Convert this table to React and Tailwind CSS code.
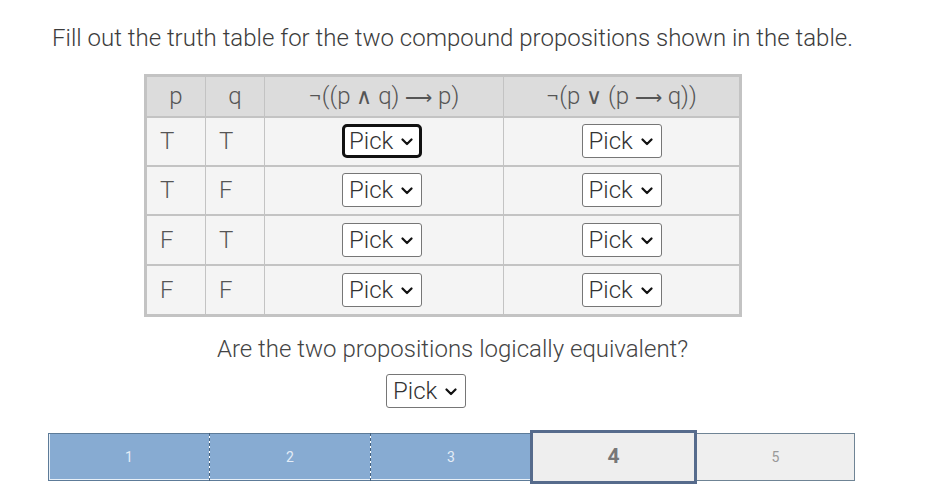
import React from 'react';

const rows = [
  ['T', 'T', 'h-[49px]'],
  ['T', 'F', 'h-[49px]'],
  ['F', 'T', 'h-[50px]'],
  ['F', 'F', 'h-[51px]'],
];

function Sym({ children, size = 'text-[22px]' }) {
  return <span className={"font-['DejaVu_Sans',sans-serif] font-extralight " + size}>{children}</span>;
}

function Pick({ focused = false }) {
  return (
    <div
      className={
        'inline-flex items-center h-[34px] w-[80px] bg-white gap-[8px] text-[24px] text-[#333] ' +
        (focused ? 'border-[3px] border-[#111] rounded-[5px] pl-[4px]' : 'border border-[#767676] rounded-[3px] pl-[6px]')
      }
    >
      <span className="leading-none">Pick</span>
      <svg width="12" height="8" viewBox="0 0 12 8" className="mt-[2px]">
        <path d="M1.5 1.5 L6 6 L10.5 1.5" fill="none" stroke="#111" strokeWidth="2.2" strokeLinecap="round" strokeLinejoin="round" />
      </svg>
    </div>
  );
}

function Seg({ n, first = false }) {
  return (
    <div
      className={
        'h-full bg-[#87abd2] border-y border-[#5d7b98] flex items-center justify-center text-[14px] text-[#e4edf7] font-normal ' +
        (first ? 'w-[161px] border-l shadow-[inset_1px_-1px_0_#e8f0f8]' : 'w-[160px] shadow-[inset_0_-1px_0_#e8f0f8]')
      }
    >
      {n}
    </div>
  );
}

export default function App() {
  return (
    <div className="w-[927px] h-[492px] bg-white font-['Roboto',sans-serif] font-light text-[#444] pt-[22px]">
      <h1 className="ml-[52px] text-[24px] leading-[32px] font-light text-[#3c3c3c]">
        Fill out the truth table for the two compound propositions shown in the table.
      </h1>

      <table className="ml-[144px] mt-[20px] border-collapse border-[3px] border-[#c3c3c3] w-[598px] text-[24px] text-[#555]">
        <thead>
          <tr className="h-[41px] bg-[#dcdcdc]">
            <th className="w-[60px] font-light border-x border-b-2 border-[#c3c3c3] leading-none">p</th>
            <th className="w-[59px] font-light border-x border-b-2 border-[#c3c3c3] leading-none">q</th>
            <th className="w-[239px] font-light border-x border-b-2 border-[#c3c3c3] leading-none">
              ¬((p <Sym>∧</Sym> q) <Sym size="text-[19px]">⟶</Sym> p)
            </th>
            <th className="font-light border-x border-b-2 border-[#c3c3c3] leading-none">
              ¬(p <Sym>∨</Sym> (p <Sym size="text-[19px]">⟶</Sym> q))
            </th>
          </tr>
        </thead>
        <tbody>
          {rows.map(([p, q, h], i) => (
            <tr key={i} className={h + ' bg-[#f4f4f4]'}>
              <td className="text-left pl-[13px] border-x border-y-2 border-[#c3c3c3] leading-none">{p}</td>
              <td className="text-left pl-[13px] border-x border-y-2 border-[#c3c3c3] leading-none">{q}</td>
              <td className="text-center border-x border-y-2 border-[#c3c3c3]">
                <div className="flex justify-center pr-[4px]">
                  <Pick focused={i === 0} />
                </div>
              </td>
              <td className="text-center border-x border-y-2 border-[#c3c3c3]">
                <div className="flex justify-center">
                  <Pick />
                </div>
              </td>
            </tr>
          ))}
        </tbody>
      </table>

      <p className="mt-[17px] ml-[217px] text-[24px] leading-[30px] text-[#444]">
        Are the two propositions logically equivalent?
      </p>
      <div className="mt-[10px] ml-[386px]">
        <Pick />
      </div>

      <div className="mt-[25px] ml-[48px] flex items-center h-[48px]">
        <div className="flex h-full">
          <Seg n="1" first />
          <div className="w-0 h-full border-l border-dashed border-[#45627f]" />
          <Seg n="2" />
          <div className="w-0 h-full border-l border-dashed border-[#45627f]" />
          <Seg n="3" />
        </div>
        <div className="w-[167px] h-[54px] -ml-[1px] bg-[#eeeeee] border-[3px] border-[#566b8c] flex items-center justify-center text-[21px] font-bold text-[#777]">
          4
        </div>
        <div className="w-[158px] h-full bg-[#efefef] border border-l-0 border-[#6f8495] flex items-center justify-center text-[14px] text-[#999] font-normal">
          5
        </div>
      </div>
    </div>
  );
}
